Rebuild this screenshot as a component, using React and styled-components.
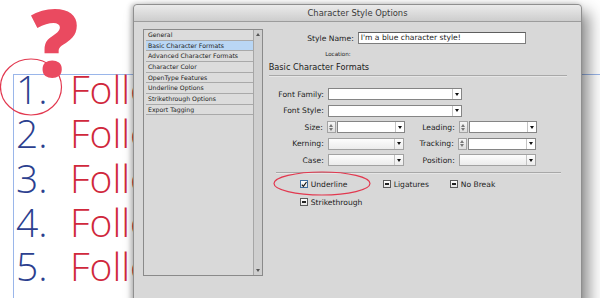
import React from "react";
import styled, { createGlobalStyle } from "styled-components";

const GlobalStyle = createGlobalStyle`
  html, body {
    margin: 0;
    padding: 0;
    background: #fff;
  }
  body {
    width: 600px;
    height: 298px;
    overflow: hidden;
  }
`;

const Page = styled.div`
  position: relative;
  width: 600px;
  height: 298px;
  overflow: hidden;
  background: #fff;
`;

// the InDesign text frame behind the dialog
const TextFrame = styled.div`
  margin: 74px 0 0 13px;
  height: 224px;
  border-top: 1px solid #9ab6ea;
  border-left: 1px solid #9ab6ea;
`;

// only the part left of the dialog can be seen
const NumberedList = styled.div`
  width: 119px;
  overflow: hidden;
  margin-top: -9px;
  padding-left: 2px;
`;

const ListLine = styled.div`
  display: grid;
  grid-template-columns: 54px auto;
  height: 44.3px;
  line-height: 45px;
  font-family: "Open Sans", sans-serif;
  font-weight: 300;
  font-size: 39px;
  white-space: nowrap;
`;

const Num = styled.span`
  color: #2c3f8f;
`;

const Follow = styled.span`
  color: #d0283c;
`;

const QuestionMark = styled.div`
  position: absolute;
  left: 31px;
  top: -6px;
  font-family: "Open Sans", sans-serif;
  font-weight: 800;
  font-size: 94px;
  line-height: 1;
  color: #ea4a60;
`;

const Marks = styled.svg`
  position: absolute;
  left: 0;
  top: 0;
  pointer-events: none;
`;

// dialog window
const Dialog = styled.div`
  position: absolute;
  left: 133px;
  top: 4px;
  width: 449px;
  height: 310px;
  background: #d8d8d8;
  border: 1px solid #8f8f8f;
  border-radius: 4px 4px 0 0;
  box-shadow: 7px 8px 16px rgba(0, 0, 0, 0.45), -2px 0 5px rgba(0, 0, 0, 0.25);
  font-family: "DejaVu Sans", sans-serif;
  color: #1d1d1d;
  box-sizing: border-box;
`;

const TitleBar = styled.div`
  height: 16px;
  display: flex;
  align-items: center;
  justify-content: center;
  background: linear-gradient(#ebebeb, #cdcdcd);
  border-bottom: 1px solid #9c9c9c;
  border-radius: 4px 4px 0 0;
  font-size: 8.4px;
  color: #3a3a3a;
`;

const DialogBody = styled.div`
  display: flex;
  gap: 6px;
  padding: 7px 14px 0 9px;
`;

const CategoryBox = styled.div`
  display: flex;
  width: 120px;
  height: 247px;
  box-sizing: border-box;
  border: 1px solid #8a8a8a;
  background: #d9d9d9;
`;

const CategoryRows = styled.div`
  flex: 1;
  padding: 0 0 0 2px;
`;

const CategoryRow = styled.div`
  height: 9.67px;
  border-bottom: 1px solid #a9a9a9;
  padding-left: 2px;
  font-size: 6.2px;
  line-height: 10px;
  color: #222;
  white-space: nowrap;
  background: ${(p) => (p.$selected ? "#b9d6f4" : "#dcdcdc")};
`;

const ScrollTrack = styled.div`
  width: 8px;
  display: flex;
  flex-direction: column;
  justify-content: space-between;
  align-items: center;
  border-left: 1px solid #a6a6a6;
  background: #cfcfcf;
  padding: 3px 0;
`;

const Tri = styled.span`
  width: 0;
  height: 0;
  border-left: 2.5px solid transparent;
  border-right: 2.5px solid transparent;
  ${(p) =>
    p.$up
      ? `border-bottom: 3px solid ${p.$color || "#333"};`
      : `border-top: 3px solid ${p.$color || "#333"};`}
`;

const Panel = styled.div`
  width: 299px;
  display: flex;
  flex-direction: column;
  padding-top: 3px;
`;

const Row = styled.div`
  display: flex;
  align-items: center;
  height: ${(p) => p.$h || 12}px;
  margin-top: ${(p) => p.$mt || 0}px;
  margin-left: ${(p) => p.$ml || 0}px;
`;

const Label = styled.span`
  width: ${(p) => p.$w}px;
  text-align: right;
  font-size: ${(p) => p.$size || 7.6}px;
  white-space: nowrap;
  padding-right: ${(p) => p.$gap || 4}px;
  box-sizing: border-box;
`;

const TextInput = styled.div`
  width: 168px;
  height: 12px;
  box-sizing: border-box;
  border: 1px solid #7d7d7d;
  border-top-color: #5e5e5e;
  background: #fff;
  font-size: 7.6px;
  line-height: 10px;
  padding-left: 2px;
  white-space: nowrap;
`;

const Heading = styled.div`
  height: 12px;
  margin-top: 3px;
  font-size: 8.2px;
  line-height: 12px;
`;

const Rule = styled.div`
  height: 1px;
  background: #a8a8a8;
  border-bottom: 1px solid #e6e6e6;
  margin: ${(p) => p.$m};
`;

const Select = styled.div`
  display: flex;
  width: ${(p) => p.$w}px;
  height: 12px;
  box-sizing: border-box;
  border: 1px solid ${(p) => (p.$soft ? "#a2a2a2" : "#858585")};
  background: ${(p) =>
    p.$soft ? "linear-gradient(#fdfdfd, #ececec)" : "#fff"};
`;

const SelectField = styled.div`
  flex: 1;
`;

const SelectArrow = styled.div`
  width: 8px;
  display: flex;
  align-items: center;
  justify-content: center;
  border-left: 1px solid #c4c4c4;
`;

const Spinner = styled.div`
  width: 9px;
  height: 12px;
  box-sizing: border-box;
  margin-right: 1px;
  border: 1px solid #a3a3a3;
  background: linear-gradient(#f6f6f6, #dedede);
  display: flex;
  flex-direction: column;
  align-items: center;
  justify-content: center;
  gap: 1px;
`;

const CheckItem = styled.div`
  display: flex;
  align-items: center;
  width: ${(p) => p.$w || "auto"}px;
  font-size: 7.6px;
  white-space: nowrap;
`;

const Box = styled.span`
  width: 8px;
  height: 8px;
  box-sizing: border-box;
  margin-right: 3px;
  border: 1px solid ${(p) => (p.$checked ? "#3f6d9e" : "#5a5a5a")};
  background: linear-gradient(#ffffff, #e4e4e4);
  display: flex;
  align-items: center;
  justify-content: center;
`;

const Dash = styled.span`
  width: 4px;
  height: 1.5px;
  background: #222;
`;

const Dropdown = ({ w, soft }) => (
  <Select $w={w} $soft={soft}>
    <SelectField />
    <SelectArrow>
      <Tri $color="#111" />
    </SelectArrow>
  </Select>
);

const Spin = () => (
  <Spinner>
    <Tri $up $color="#777" />
    <Tri $color="#777" />
  </Spinner>
);

const Check = ({ label, checked, w }) => (
  <CheckItem $w={w}>
    <Box $checked={checked}>
      {checked ? (
        <svg width="7" height="7" viewBox="0 0 7 7">
          <path d="M1 3.6 L2.8 5.6 L6.4 0.6" fill="none" stroke="#111" strokeWidth="1.3" />
        </svg>
      ) : (
        <Dash />
      )}
    </Box>
    {label}
  </CheckItem>
);

const categories = [
  "General",
  "Basic Character Formats",
  "Advanced Character Formats",
  "Character Color",
  "OpenType Features",
  "Underline Options",
  "Strikethrough Options",
  "Export Tagging",
];

export default function App() {
  return (
    <Page>
      <GlobalStyle />
      <TextFrame>
        <NumberedList>
          {[1, 2, 3, 4, 5].map((n) => (
            <ListLine key={n}>
              <Num>{n}.</Num>
              <Follow>Follo</Follow>
            </ListLine>
          ))}
        </NumberedList>
      </TextFrame>

      <Marks width="600" height="298">
        <ellipse cx="31" cy="87" rx="30.5" ry="28" fill="none" stroke="#e2384f" strokeWidth="1.2" />
      </Marks>
      <QuestionMark>?</QuestionMark>

      <Dialog>
        <TitleBar>Character Style Options</TitleBar>
        <DialogBody>
          <CategoryBox>
            <CategoryRows>
              {categories.map((c, i) => (
                <CategoryRow key={c} $selected={i === 1}>
                  {c}
                </CategoryRow>
              ))}
            </CategoryRows>
            <ScrollTrack>
              <Tri $up $color="#555" />
              <Tri $color="#555" />
            </ScrollTrack>
          </CategoryBox>

          <Panel>
            <Row>
              <Label $w={89}>Style Name:</Label>
              <TextInput>I'm a blue character style!</TextInput>
            </Row>
            <Row $h={8} $mt={6}>
              <Label $w={86} $size={5.6}>Location:</Label>
            </Row>
            <Heading>Basic Character Formats</Heading>
            <Rule $m="2px 0 0 0" />
            <Row $mt={11}>
              <Label $w={59}>Font Family:</Label>
              <Dropdown w={134} />
            </Row>
            <Row $mt={4.5}>
              <Label $w={59}>Font Style:</Label>
              <Dropdown w={134} />
            </Row>
            <Row $mt={4.5}>
              <Label $w={58}>Size:</Label>
              <Spin />
              <Dropdown w={68} />
              <Label $w={54}>Leading:</Label>
              <Spin />
              <Dropdown w={68} />
            </Row>
            <Row $mt={4.5}>
              <Label $w={59}>Kerning:</Label>
              <Dropdown w={76} soft />
              <Label $w={54}>Tracking:</Label>
              <Spin />
              <Dropdown w={68} />
            </Row>
            <Row $mt={4.5}>
              <Label $w={59}>Case:</Label>
              <Dropdown w={76} soft />
              <Label $w={55}>Position:</Label>
              <Dropdown w={77} soft />
            </Row>
            <Rule $m="6px 6px 0 7px" />
            <Row $h={10} $mt={5} $ml={31}>
              <Check label="Underline" checked w={83} />
              <Check label="Ligatures" w={67} />
              <Check label="No Break" />
            </Row>
            <Row $h={10} $mt={8} $ml={31}>
              <Check label="Strikethrough" />
            </Row>
          </Panel>
        </DialogBody>
      </Dialog>

      <Marks width="600" height="298">
        <ellipse cx="322" cy="183.5" rx="48" ry="11.5" fill="none" stroke="#e2384f" strokeWidth="1.2" />
      </Marks>
    </Page>
  );
}
